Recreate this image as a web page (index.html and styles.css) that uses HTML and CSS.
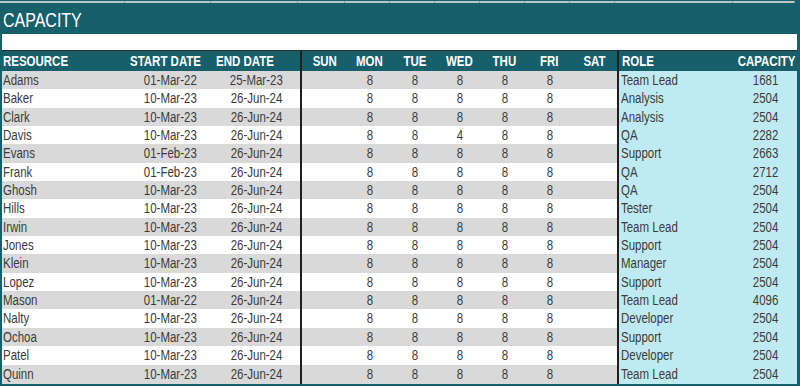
FILE: index.html
```html
<!DOCTYPE html>
<html>
<head>
<meta charset="utf-8">
<link rel="stylesheet" href="styles.css">
</head>
<body>
<div class="sheet">
  <div class="topline">
    <span></span><span></span><span></span><span></span><span></span><span></span><span></span><span></span><span></span><span></span><span></span><span></span>
  </div>
  <div class="title"><span class="t">CAPACITY</span></div>
  <div class="whitebar"></div>
  <div class="row head">
    <div class="c l"><span class="t">RESOURCE</span></div>
    <div class="c l"><span class="t">START DATE</span></div>
    <div class="c l"><span class="t">END DATE</span></div>
    <div class="c d sun"><span class="t">SUN</span></div>
    <div class="c d"><span class="t">MON</span></div>
    <div class="c d"><span class="t">TUE</span></div>
    <div class="c d"><span class="t">WED</span></div>
    <div class="c d"><span class="t">THU</span></div>
    <div class="c d"><span class="t">FRI</span></div>
    <div class="c d"><span class="t">SAT</span></div>
    <div class="c l role"><span class="t">ROLE</span></div>
    <div class="c r cap"><span class="t">CAPACITY</span></div>
  </div>
  <div id="rows"></div>
</div>
<script>
const data = [
  ["Adams","01-Mar-22","25-Mar-23",[8,8,8,8,8],"Team Lead",1681],
  ["Baker","10-Mar-23","26-Jun-24",[8,8,8,8,8],"Analysis",2504],
  ["Clark","10-Mar-23","26-Jun-24",[8,8,8,8,8],"Analysis",2504],
  ["Davis","10-Mar-23","26-Jun-24",[8,8,4,8,8],"QA",2282],
  ["Evans","01-Feb-23","26-Jun-24",[8,8,8,8,8],"Support",2663],
  ["Frank","01-Feb-23","26-Jun-24",[8,8,8,8,8],"QA",2712],
  ["Ghosh","10-Mar-23","26-Jun-24",[8,8,8,8,8],"QA",2504],
  ["Hills","10-Mar-23","26-Jun-24",[8,8,8,8,8],"Tester",2504],
  ["Irwin","10-Mar-23","26-Jun-24",[8,8,8,8,8],"Team Lead",2504],
  ["Jones","10-Mar-23","26-Jun-24",[8,8,8,8,8],"Support",2504],
  ["Klein","10-Mar-23","26-Jun-24",[8,8,8,8,8],"Manager",2504],
  ["Lopez","10-Mar-23","26-Jun-24",[8,8,8,8,8],"Support",2504],
  ["Mason","01-Mar-22","26-Jun-24",[8,8,8,8,8],"Team Lead",4096],
  ["Nalty","10-Mar-23","26-Jun-24",[8,8,8,8,8],"Developer",2504],
  ["Ochoa","10-Mar-23","26-Jun-24",[8,8,8,8,8],"Support",2504],
  ["Patel","10-Mar-23","26-Jun-24",[8,8,8,8,8],"Developer",2504],
  ["Quinn","10-Mar-23","26-Jun-24",[8,8,8,8,8],"Team Lead",2504]
];
const host = document.getElementById("rows");
const t = s => '<span class="t">' + s + '</span>';
data.forEach((r, i) => {
  const row = document.createElement("div");
  row.className = "row body " + (i % 2 === 0 ? "shade" : "plain");
  let h = '<div class="c l">' + t(r[0]) + '</div>' +
          '<div class="c m">' + t(r[1]) + '</div>' +
          '<div class="c m">' + t(r[2]) + '</div>' +
          '<div class="c d sun"></div>';
  r[3].forEach(v => { h += '<div class="c d">' + t(v) + '</div>'; });
  h += '<div class="c d"></div>' +
       '<div class="c l role">' + t(r[4]) + '</div>' +
       '<div class="c m cap">' + t(r[5]) + '</div>';
  row.innerHTML = h;
  host.appendChild(row);
});
</script>
</body>
</html>
```
FILE: styles.css
```css
html, body {
  margin: 0;
  padding: 0;
  background: #165f6b;
}
.sheet {
  width: 800px;
  height: 386px;
  overflow: hidden;
  padding: 0 3px 0 2px;
  box-sizing: border-box;
  font-family: "Liberation Sans", Arial, sans-serif;
  font-size: 14px;
  color: #3b3b3b;
}
.t {
  display: inline-block;
  transform: scaleX(0.82);
  transform-origin: left center;
}
.topline {
  display: grid;
  grid-template-columns: 125px 86px 87px 47px 45px 45px 45px 45px 45px 45px 118px 62px;
  height: 2px;
  margin-top: 1px;
  margin-left: -2px;
}
.topline span {
  background: #bcc6c8;
  border-right: 1px solid #8a9fa3;
}
.title {
  height: 31px;
  line-height: 34px;
  color: #ffffff;
  font-size: 19.5px;
  padding-left: 1px;
}
.whitebar {
  height: 16px;
  background: #ffffff;
  border-bottom: 1px solid #2a2a2a;
}
.row {
  display: grid;
  grid-template-columns: 125px 86px 87px 47px 45px 45px 45px 45px 45px 45px 118px 62px;
}
.c {
  white-space: nowrap;
  overflow: visible;
  box-sizing: border-box;
}
.head {
  height: 20px;
  line-height: 21px;
  color: #ffffff;
  font-weight: bold;
  border-bottom: 1px solid #2e4f55;
  box-sizing: border-box;
}
.head .c { background: #165f6b; }
.body {
  height: 18.35px;
  line-height: 19px;
}
.l { text-align: left; padding-left: 1px; }
.head .l + .l { padding-left: 3px; }
.m, .d { text-align: center; }
.m .t, .d .t { transform-origin: center center; }
.sun { border-left: 2px solid #1f1f1f; }
.role { border-left: 2px solid #1f1f1f; padding-left: 2px; }
.head .role { padding-left: 3px; }
.shade .c { background: #d9d9d9; }
.plain .c { background: #ffffff; }
.body .role, .body .cap { background: #c0eaf1; }
.head .cap {
  display: flex;
  justify-content: flex-end;
  padding-right: 1px;
}
.head .cap .t { transform-origin: right center; flex: none; }
```
